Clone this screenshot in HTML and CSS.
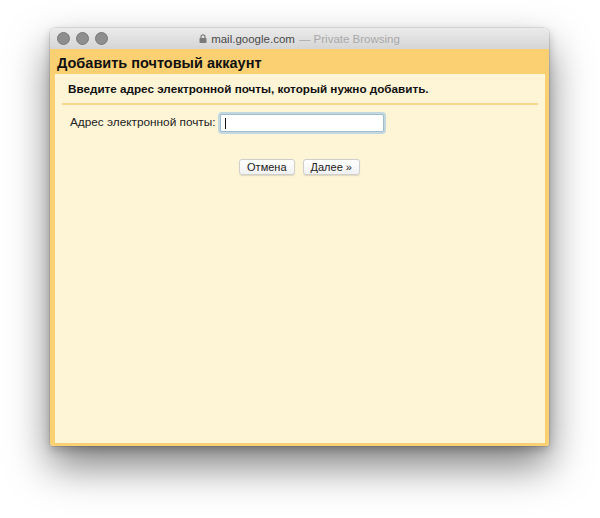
FILE: index.html
```html
<!DOCTYPE html>
<html lang="ru">
<head>
<meta charset="utf-8">
<title>Добавить почтовый аккаунт</title>
<link rel="stylesheet" href="styles.css">
</head>
<body>
<div class="window">
  <div class="titlebar">
    <div class="lights">
      <span class="light"></span>
      <span class="light"></span>
      <span class="light"></span>
    </div>
    <div class="title">
      <svg class="lock" width="8" height="9" viewBox="0 0 8 9"><path d="M2 4V2.8a2 2 0 0 1 4 0V4" fill="none" stroke="#7a7a7a" stroke-width="1.2"/><rect x="0.5" y="4" width="7" height="5" rx="0.8" fill="#7a7a7a"/></svg>
      <span class="host">mail.google.com</span>
      <span class="mode">— Private Browsing</span>
    </div>
  </div>
  <div class="content">
    <h1 class="heading">Добавить почтовый аккаунт</h1>
    <div class="panel">
      <p class="intro">Введите адрес электронной почты, который нужно добавить.</p>
      <div class="divider"></div>
      <div class="field">
        <label class="label" for="email">Адрес электронной почты:</label>
        <div class="input-wrap"><input id="email" class="input" type="text"><span class="caret"></span></div>
      </div>
      <div class="actions">
        <button class="btn">Отмена</button>
        <button class="btn">Далее »</button>
      </div>
    </div>
  </div>
</div>
</body>
</html>
```

FILE: styles.css
```css
html, body {
  margin: 0;
  padding: 0;
  background: #ffffff;
}
body {
  box-sizing: border-box;
  min-height: 518px;
  padding: 28px 0 0 50px;
  font-family: "Liberation Sans", Arial, sans-serif;
}
.window {
  width: 499px;
  height: 418px;
  display: flex;
  flex-direction: column;
  border-radius: 5px 5px 3px 3px;
  box-shadow: 0 20px 40px rgba(0, 0, 0, 0.5), 0 4px 10px rgba(0, 0, 0, 0.2), 0 0 0 0.5px rgba(0, 0, 0, 0.18);
  overflow: hidden;
}
.titlebar {
  height: 21px;
  flex: none;
  display: flex;
  align-items: center;
  position: relative;
  background: linear-gradient(#ebebeb, #d5d5d5);
}
.lights {
  display: flex;
  gap: 6px;
  padding-left: 7px;
}
.light {
  width: 11px;
  height: 11px;
  border-radius: 50%;
  background: #8e8e8e;
  border: 0.5px solid #787878;
}
.title {
  position: absolute;
  left: 0;
  right: 0;
  top: 0;
  height: 21px;
  display: flex;
  align-items: center;
  justify-content: center;
  font-size: 11.5px;
  gap: 4px;
}
.lock { margin-top: -1px; }
.host { color: #4a4a4a; }
.mode { color: #a9a9a9; }
.content {
  flex: 1;
  display: flex;
  flex-direction: column;
  background: #fbd072;
  padding: 0 4px 3px 5px;
}
.heading {
  margin: 0;
  height: 25px;
  line-height: 28px;
  padding-left: 2px;
  font-size: 14.5px;
  font-weight: bold;
  color: #111;
}
.panel {
  flex: 1;
  background: #fef5d7;
  padding: 0 7px;
}
.intro {
  margin: 0;
  padding: 9px 0 0 6px;
  height: 20px;
  line-height: 12px;
  font-size: 11.7px;
  font-weight: bold;
  color: #111;
}
.divider {
  height: 2px;
  background: #f6d98e;
}
.field {
  display: flex;
  align-items: center;
  margin-top: 9px;
  padding-left: 8px;
  gap: 4px;
}
.label {
  font-size: 11.8px;
  color: #222;
  margin-top: -2px;
}
.input-wrap {
  position: relative;
}
.input {
  display: block;
  width: 162px;
  height: 16px;
  margin: 0;
  padding: 0;
  background: #fff;
  border: 1px solid #9fbdca;
  box-shadow: 0 0 0 2px #c3d7e0;
  border-radius: 2px;
  outline: none;
}
.caret {
  position: absolute;
  left: 5px;
  top: 4px;
  width: 1px;
  height: 11px;
  background: #111;
}
.actions {
  display: flex;
  justify-content: center;
  gap: 8px;
  margin-top: 27px;
  padding-right: 1px;
}
.btn {
  height: 16px;
  margin: 0;
  padding: 0 7px;
  font-family: "Liberation Sans", Arial, sans-serif;
  font-size: 11px;
  line-height: 14px;
  color: #222;
  background: linear-gradient(#ffffff, #f1f1f1);
  border: 1px solid #cfcfcf;
  border-radius: 3px;
  box-shadow: 0 0.5px 1px rgba(0, 0, 0, 0.12);
}
```
